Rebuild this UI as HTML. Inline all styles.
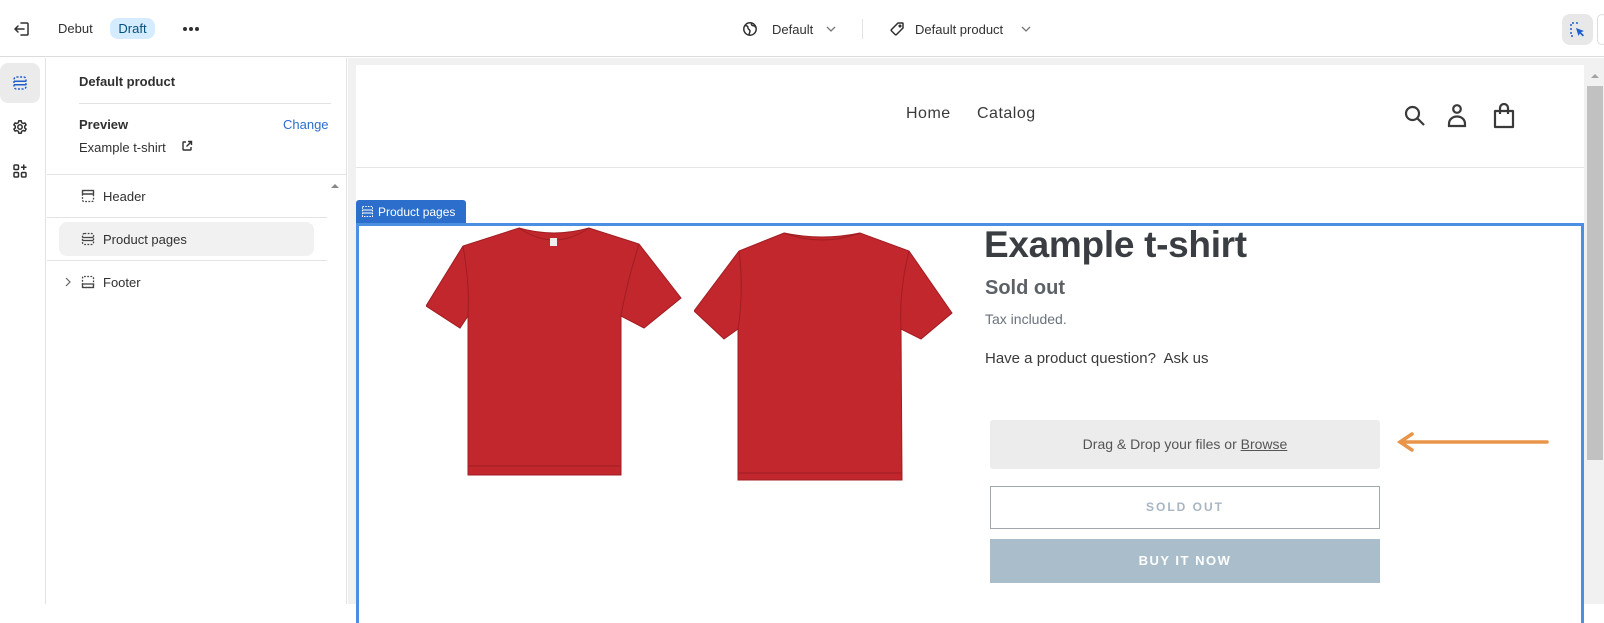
<!DOCTYPE html>
<html><head><meta charset="utf-8"><style>
*{box-sizing:border-box;margin:0;padding:0}
body{width:1604px;height:604px;overflow:hidden;background:#fff;font-family:"Liberation Sans",sans-serif;color:#303030;position:relative}
.a{position:absolute}
.t13{font-size:13px}
</style></head><body>
<!-- top bar -->
<div class="a" style="left:0;top:0;width:1604px;height:57px;border-bottom:1px solid #dcdcdc;background:#fff"></div>
<svg class="a" style="left:13px;top:20px" width="18" height="18" viewBox="0 0 18 18" fill="none" stroke="#303030" stroke-width="1.5" stroke-linecap="round" stroke-linejoin="round"><path d="M8 3h6a1 1 0 0 1 1 1v10a1 1 0 0 1-1 1H8"/><path d="M11 9H2M5 6L2 9l3 3"/></svg>
<div class="a t13" style="left:58px;top:21px">Debut</div>
<div class="a t13" style="left:110px;top:18px;width:45px;height:21px;border-radius:8px;background:#d5ebff;color:#00527c;text-align:center;line-height:21px">Draft</div>
<svg class="a" style="left:182px;top:26px" width="18" height="6" viewBox="0 0 18 6"><circle cx="3" cy="3" r="2" fill="#303030"/><circle cx="9" cy="3" r="2" fill="#303030"/><circle cx="15" cy="3" r="2" fill="#303030"/></svg>
<svg class="a" style="left:742px;top:21px" width="16" height="16" viewBox="0 0 16 16" fill="none" stroke="#303030" stroke-width="1.5"><circle cx="8" cy="8" r="6.2"/><path d="M3 4.5c2 0 3 1 3 2.5s2 1.5 2 3-1 2.5-1 4M9.5 2.2c-.5 1.5.5 2.5 2 2.5s2 .8 2 2"/></svg>
<div class="a t13" style="left:772px;top:22px">Default</div>
<svg class="a" style="left:825px;top:25px" width="12" height="8" viewBox="0 0 12 8" fill="none" stroke="#777" stroke-width="1.3"><path d="M2 2l4 4 4-4"/></svg>
<div class="a" style="left:862px;top:19px;width:1px;height:20px;background:#e3e3e3"></div>
<svg class="a" style="left:889px;top:21px" width="16" height="16" viewBox="0 0 16 16" fill="none" stroke="#303030" stroke-width="1.5" stroke-linejoin="round"><path d="M9 2h4.5a.5.5 0 0 1 .5.5V7L7.5 13.5a1 1 0 0 1-1.4 0L2.5 9.9a1 1 0 0 1 0-1.4z"/><circle cx="11" cy="5" r=".8"/></svg>
<div class="a t13" style="left:915px;top:22px">Default product</div>
<svg class="a" style="left:1020px;top:25px" width="12" height="8" viewBox="0 0 12 8" fill="none" stroke="#777" stroke-width="1.3"><path d="M2 2l4 4 4-4"/></svg>
<div class="a" style="left:1562px;top:14px;width:31px;height:31px;border-radius:8px;background:#e8e8e8"></div>
<svg class="a" style="left:1569px;top:21px" width="17" height="17" viewBox="0 0 17 17" fill="none" stroke="#1f5fcc" stroke-width="1.5" stroke-dasharray="2 2"><path d="M2 9V2h8"/><path d="M2 11v4h3"/></svg>
<svg class="a" style="left:1575px;top:27px" width="10" height="10" viewBox="0 0 10 10"><path d="M1 1l8 3-3 1.3 3 3-1.2 1.2-3-3L3.5 9z" fill="#1f5fcc"/></svg>
<div class="a" style="left:1597px;top:14px;width:10px;height:31px;border:1px solid #ddd;border-radius:8px"></div>

<!-- left rail -->
<div class="a" style="left:0;top:58px;width:46px;height:546px;border-right:1px solid #e3e3e3"></div>
<div class="a" style="left:0;top:63px;width:40px;height:40px;border-radius:8px;background:#ebebeb"></div>
<svg class="a" style="left:12px;top:75px" width="16" height="16" viewBox="0 0 16 16" fill="none" stroke="#1f5fcc" stroke-width="1.5"><rect x="2" y="2" width="12" height="12" rx="2.5" stroke-dasharray="2 1.6"/><path d="M2 6.3h12M2 9.7h12"/></svg>
<svg class="a" style="left:12px;top:119px" width="16" height="16" viewBox="0 0 16 16" fill="none" stroke="#303030" stroke-width="1.5"><circle cx="8" cy="8" r="2.2"/><path d="M6.8 1.8h2.4l.4 1.8 1.6.9 1.7-.6 1.2 2-1.4 1.2v1.8l1.4 1.2-1.2 2-1.7-.6-1.6.9-.4 1.8H6.8l-.4-1.8-1.6-.9-1.7.6-1.2-2 1.4-1.2V7.1L1.9 5.9l1.2-2 1.7.6 1.6-.9z" stroke-linejoin="round"/></svg>
<svg class="a" style="left:12px;top:163px" width="16" height="16" viewBox="0 0 16 16" fill="none" stroke="#303030" stroke-width="1.5"><rect x="2" y="2" width="4.5" height="4.5" rx="1"/><rect x="2" y="9.5" width="4.5" height="4.5" rx="1"/><rect x="9.5" y="9.5" width="4.5" height="4.5" rx="1"/><path d="M11.75 1.5v5.5M9 4.25h5.5"/></svg>

<!-- sidebar -->
<div class="a" style="left:46px;top:58px;width:301px;height:546px;border-right:1px solid #e3e3e3;background:#fff"></div>
<div class="a t13" style="left:79px;top:74px;font-weight:bold">Default product</div>
<div class="a" style="left:79px;top:103px;width:252px;height:1px;background:#e3e3e3"></div>
<div class="a t13" style="left:79px;top:117px;font-weight:bold">Preview</div>
<div class="a t13" style="left:283px;top:117px;color:#2c6ecb">Change</div>
<div class="a t13" style="left:79px;top:140px">Example t-shirt</div>
<svg class="a" style="left:181px;top:140px" width="12" height="12" viewBox="0 0 12 12" fill="none" stroke="#303030" stroke-width="1.4"><path d="M5 2H2.5a.5.5 0 0 0-.5.5v7a.5.5 0 0 0 .5.5h7a.5.5 0 0 0 .5-.5V7M7 1.5h3.5V5M10.3 1.7L5.5 6.5"/></svg>
<div class="a" style="left:47px;top:174px;width:300px;height:1px;background:#e3e3e3"></div>
<svg class="a" style="left:331px;top:183px" width="8" height="6" viewBox="0 0 8 6"><path d="M0 5l4-4 4 4z" fill="#888"/></svg>
<svg class="a" style="left:81px;top:189px" width="14" height="14" viewBox="0 0 14 14" fill="none" stroke="#444" stroke-width="1.3"><rect x="1.5" y="1.5" width="11" height="11" rx="1.5" stroke-dasharray="1.8 1.4"/><path d="M1.5 5h11"/><rect x="1.5" y="1.5" width="11" height="3.5"/></svg>
<div class="a t13" style="left:103px;top:189px">Header</div>
<div class="a" style="left:47px;top:217px;width:280px;height:1px;background:#e3e3e3"></div>
<div class="a" style="left:59px;top:222px;width:255px;height:34px;border-radius:8px;background:#f1f1f1"></div>
<svg class="a" style="left:81px;top:232px" width="14" height="14" viewBox="0 0 14 14" fill="none" stroke="#444" stroke-width="1.3"><rect x="1.5" y="1.5" width="11" height="11" rx="2" stroke-dasharray="1.8 1.4"/><path d="M1.5 5.5h11M1.5 8.5h11"/></svg>
<div class="a t13" style="left:103px;top:232px">Product pages</div>
<div class="a" style="left:47px;top:260px;width:280px;height:1px;background:#e3e3e3"></div>
<svg class="a" style="left:64px;top:277px" width="8" height="10" viewBox="0 0 8 10" fill="none" stroke="#666" stroke-width="1.2"><path d="M2 1l4 4-4 4"/></svg>
<svg class="a" style="left:81px;top:275px" width="14" height="14" viewBox="0 0 14 14" fill="none" stroke="#444" stroke-width="1.3"><rect x="1.5" y="1.5" width="11" height="11" rx="1.5" stroke-dasharray="1.8 1.4"/><rect x="1.5" y="9" width="11" height="3.5"/></svg>
<div class="a t13" style="left:103px;top:275px">Footer</div>

<!-- preview area -->
<div class="a" style="left:348px;top:58px;width:1256px;height:546px;background:#f1f1f1"></div>
<div class="a" style="left:356px;top:65px;width:1228px;height:539px;background:#fff"></div>
<div class="a" style="left:1586px;top:65px;width:18px;height:539px;background:#f1f1f1"></div>
<svg class="a" style="left:1591px;top:73px" width="8" height="6" viewBox="0 0 8 6"><path d="M0 5l4-4 4 4z" fill="#a3a3a3"/></svg>
<div class="a" style="left:1587px;top:86px;width:16px;height:374px;background:#c1c1c1"></div>

<div class="a" style="left:906px;top:105px;font-size:16px;color:#3a3a3a;letter-spacing:.5px">Home</div>
<div class="a" style="left:977px;top:105px;font-size:16px;color:#3a3a3a;letter-spacing:.5px">Catalog</div>
<svg class="a" style="left:1403px;top:104px" width="24" height="24" viewBox="0 0 24 24" fill="none" stroke="#3a3a3a" stroke-width="2.2"><circle cx="9.5" cy="9.5" r="6.5"/><path d="M14.5 14.5l6.5 6.5"/></svg>
<svg class="a" style="left:1446px;top:103px" width="22" height="26" viewBox="0 0 22 26" fill="none" stroke="#3a3a3a" stroke-width="2.2"><circle cx="11" cy="6" r="3.8"/><path d="M3 21c0-5 4-7.5 8-7.5s8 2.5 8 7.5v2H3z"/></svg>
<svg class="a" style="left:1492px;top:103px" width="24" height="26" viewBox="0 0 24 26" fill="none" stroke="#3a3a3a" stroke-width="2.2" stroke-linejoin="round"><path d="M3 8h18v16H3z"/><path d="M8 11V5a4 4 0 0 1 8 0v6"/></svg>
<div class="a" style="left:356px;top:167px;width:1228px;height:1px;background:#e5e5e5"></div>

<!-- section frame -->
<div class="a" style="left:356px;top:200px;width:110px;height:24px;background:#2c6ecb;border-radius:3px 3px 0 0"></div>
<svg class="a" style="left:362px;top:206px" width="11" height="11" viewBox="0 0 11 11" fill="none" stroke="#fff" stroke-width="1"><rect x=".5" y=".5" width="10" height="10" stroke-dasharray="1.5 1.2"/><path d="M.5 4h10M.5 7h10"/></svg>
<div class="a" style="left:378px;top:205px;font-size:12px;color:#fff">Product pages</div>
<div class="a" style="left:356px;top:223px;width:1228px;height:400px;border:3px solid #4a8fe2;border-bottom:none"></div>

<!-- tshirts -->
<svg class="a" style="left:426px;top:226px" width="260" height="254" viewBox="0 0 260 254">
<path d="M93 2 Q128 12 163 2 L213 18 L255 72 L218 102 L195 90 L195 249 L42 249 L42 90 L34 102 L0 80 L37 20 Z" fill="#c1272d" stroke="#a11d22" stroke-width="1"/>
<path d="M93 2 Q128 26 163 2" fill="none" stroke="#a11d22"/><path d="M37 20 Q44 60 42 90M213 18 Q200 60 195 90M42 240h153" fill="none" stroke="#a11d22"/>
<rect x="124" y="12" width="7" height="8" fill="#eee"/>
</svg>
<svg class="a" style="left:694px;top:231px" width="262" height="254" viewBox="0 0 262 254">
<path d="M90 2 Q128 10 166 2 L215 20 L258 82 L227 108 L207 98 L208 249 L44 249 L44 98 L30 108 L0 80 L45 20 Z" fill="#c1272d" stroke="#a11d22" stroke-width="1"/>
<path d="M90 2 Q128 16 166 2M45 20 Q50 60 44 98M215 20 Q205 60 207 98M44 242h164" fill="none" stroke="#a11d22"/>
</svg>

<!-- product info -->
<div class="a" style="left:984px;top:224px;font-size:37px;font-weight:bold;color:#3a3e42;white-space:nowrap;letter-spacing:-.3px">Example t-shirt</div>
<div class="a" style="left:985px;top:277px;font-size:20px;font-weight:bold;color:#5c6166">Sold out</div>
<div class="a" style="left:985px;top:311px;font-size:14px;color:#69727b">Tax included.</div>
<div class="a" style="left:985px;top:350px;font-size:15px;color:#3a3a3a">Have a product question?&nbsp; Ask us</div>
<div class="a" style="left:990px;top:420px;width:390px;height:49px;background:#ececec;border-radius:3px;text-align:center;line-height:49px;font-size:14px;color:#555">Drag &amp; Drop your files or <u>Browse</u></div>
<svg class="a" style="left:1396px;top:432px" width="154" height="20" viewBox="0 0 154 20" fill="none" stroke="#e8954a" stroke-width="3.5" stroke-linecap="round"><path d="M5 10h146M16 2L4 10l12 8"/></svg>
<div class="a" style="left:990px;top:486px;width:390px;height:43px;border:1px solid #a0a7ad;text-align:center;line-height:41px;font-size:12px;font-weight:bold;letter-spacing:2px;color:#a8b5c2">SOLD OUT</div>
<div class="a" style="left:990px;top:539px;width:390px;height:44px;background:#a9bdca;text-align:center;line-height:44px;font-size:13px;font-weight:bold;letter-spacing:1.5px;color:#fff">BUY IT NOW</div>
</body></html>
